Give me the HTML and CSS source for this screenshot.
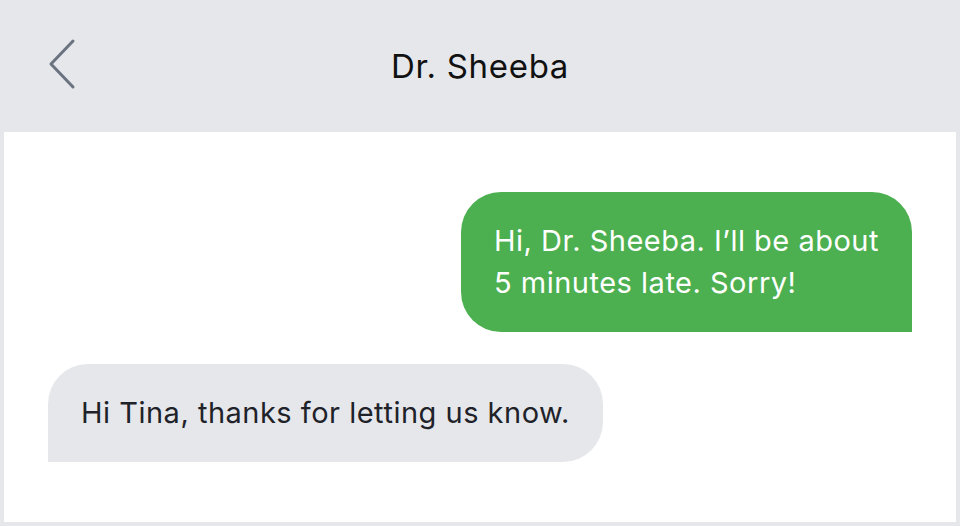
FILE: index.html
```html
<!DOCTYPE html>
<html lang="en">
<head>
<meta charset="utf-8">
<title>Dr. Sheeba</title>
<link rel="stylesheet" href="styles.css">
</head>
<body>
<div class="app">
  <header class="topbar">
    <button class="back" aria-label="Back">
      <svg width="30" height="52" viewBox="0 0 30 52" aria-hidden="true">
        <polyline points="25,3 3,26 25,49" fill="none" stroke="#6b7280" stroke-width="3" stroke-linecap="round" stroke-linejoin="round"/>
      </svg>
    </button>
    <h1 class="title">Dr. Sheeba</h1>
  </header>
  <main class="chat">
    <div class="msg msg-out">Hi, Dr. Sheeba. I’ll be about<br>5 minutes late. Sorry!</div>
    <div class="msg msg-in">Hi Tina, thanks for letting us know.</div>
  </main>
</div>
</body>
</html>
```

FILE: styles.css
```css
* { box-sizing: border-box; }
html, body { margin: 0; padding: 0; }
body {
  background: #e5e7eb;
  font-family: Inter, "Liberation Sans", Arial, sans-serif;
  width: 960px;
  height: 526px;
  overflow: hidden;
}
.app {
  display: flex;
  flex-direction: column;
  height: 526px;
  padding: 0 4px 4px;
}
.topbar {
  position: relative;
  height: 132px;
  display: flex;
  align-items: center;
  justify-content: center;
  flex: none;
}
.back {
  position: absolute;
  left: 44px;
  top: 38px;
  padding: 0;
  border: 0;
  background: none;
  display: block;
  line-height: 0;
}
.title {
  margin: 0;
  font-size: 33px;
  font-weight: 400;
  color: #111111;
  letter-spacing: 0.7px;
}
.chat {
  flex: 1;
  background: #ffffff;
  display: flex;
  flex-direction: column;
  gap: 32px;
  padding: 60px 44px;
}
.msg {
  font-size: 29px;
  line-height: 42px;
  letter-spacing: 0.5px;
  padding: 28px 33px;
  width: fit-content;
  white-space: nowrap;
}
.msg-out {
  align-self: flex-end;
  background: #4caf50;
  color: #ffffff;
  border-radius: 40px 40px 0 40px;
}
.msg-in {
  align-self: flex-start;
  background: #e5e7eb;
  color: #1f2329;
  border-radius: 40px 40px 40px 0;
}
```
